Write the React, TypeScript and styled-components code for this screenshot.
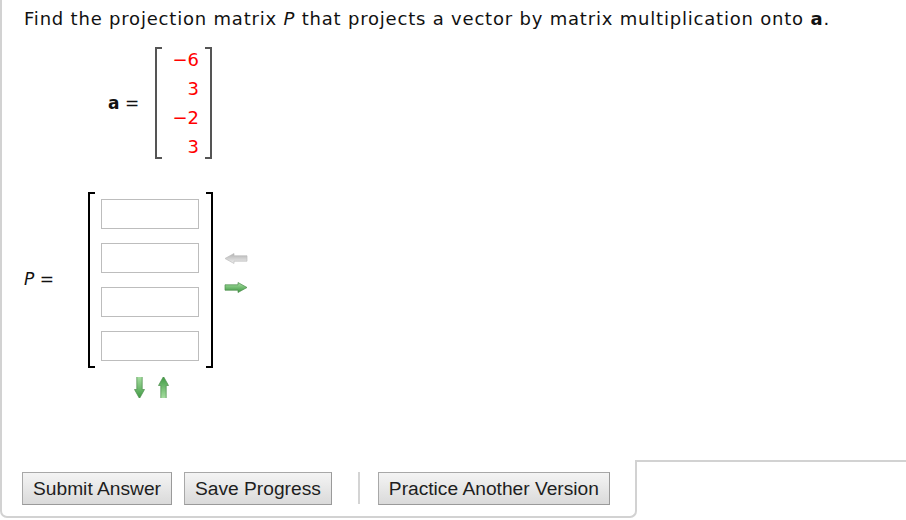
import React from "react";
import styled, { createGlobalStyle } from "styled-components";

const GlobalStyle = createGlobalStyle`
  body {
    margin: 0;
    background: #fff;
    font-family: "DejaVu Sans", Verdana, sans-serif;
  }
`;

const Panel = styled.div`
  width: 906px;
  display: flex;
  flex-direction: column;
`;

const Question = styled.div`
  height: 460px;
  box-sizing: border-box;
  border-left: 2px solid #d2d2d2;
  padding: 6px 0 0 22px;
  color: #111;
`;

const Prompt = styled.p`
  margin: 0;
  font-size: 18px;
  letter-spacing: 0.8px;
  line-height: 26px;
`;

const Var = styled.i`
  font-style: oblique;
`;

const MathRow = styled.div<{ $top: number; $indent: number }>`
  display: flex;
  align-items: center;
  margin-top: ${(p) => p.$top}px;
  margin-left: ${(p) => p.$indent}px;
`;

const Label = styled.div<{ $width: number; $lift?: number }>`
  width: ${(p) => p.$width}px;
  font-size: 17px;
  white-space: nowrap;
  margin-top: ${(p) => -(p.$lift ?? 0)}px;
`;

const Matrix = styled.div`
  display: flex;
  align-items: stretch;
`;

const Bracket = styled.div<{ $side: "left" | "right"; $color: string; $gap: number }>`
  width: 5px;
  border: 2px solid ${(p) => p.$color};
  border-${(p) => (p.$side === "left" ? "right" : "left")}: none;
  margin-${(p) => (p.$side === "left" ? "right" : "left")}: ${(p) => p.$gap}px;
`;

const Entries = styled.div`
  display: flex;
  flex-direction: column;
  align-items: flex-end;
  margin: -2px 0;
  width: 37px;
`;

const Entry = styled.span`
  color: #f00;
  font-size: 18px;
  line-height: 29px;
`;

const Cells = styled.div`
  display: flex;
  flex-direction: column;
  gap: 14px;
  padding: 7px 0;
`;

const Cell = styled.input`
  width: 98px;
  height: 30px;
  box-sizing: border-box;
  border: 1px solid #bdbdbd;
  margin: 0;
  padding: 2px 4px;
  font: 15px "DejaVu Sans", sans-serif;
`;

const SideArrows = styled.div`
  display: flex;
  flex-direction: column;
  gap: 18px;
  margin-left: 11px;
  margin-top: -14px;
`;

const ResizeRow = styled.div`
  display: flex;
  justify-content: center;
  gap: 11px;
  width: 126px;
  margin: 9px 0 0 64px;
`;

const Footer = styled.div`
  display: flex;
  height: 58px;
`;

const ButtonBar = styled.div`
  width: 637px;
  box-sizing: border-box;
  border: 2px solid #d2d2d2;
  border-top: none;
  border-radius: 0 0 7px 7px;
  display: flex;
  align-items: flex-start;
  padding: 12px 0 0 20px;
`;

const Filler = styled.div`
  flex: 1;
  border-top: 2px solid #d2d2d2;
`;

const Button = styled.button<{ $gap?: number }>`
  height: 33px;
  box-sizing: border-box;
  padding: 0 10px;
  margin-right: ${(p) => p.$gap ?? 12}px;
  border: 1px solid #a8a8a8;
  border-right-color: #9a9a9a;
  border-bottom-color: #9a9a9a;
  background: linear-gradient(#f4f4f4, #dadada);
  color: #1e1e1e;
  font: 19.2px "Liberation Sans", Arial, sans-serif;
  white-space: nowrap;
`;

const Separator = styled.div`
  width: 2px;
  height: 32px;
  background: #d4d4d4;
  margin-right: 18px;
  margin-left: 26px;
`;

type Dir = "left" | "right" | "up" | "down";

function Arrow({ dir, tone }: { dir: Dir; tone: "green" | "gray" }) {
  const id = `g-${dir}-${tone}`;
  const light = tone === "green" ? "#a9e0a3" : "#f0f0f0";
  const dark = tone === "green" ? "#3d9841" : "#b2b2b2";
  const edge = tone === "green" ? "#4a8c4a" : "#bdbdbd";
  const horizontal = dir === "left" || dir === "right";
  const w = horizontal ? 24 : 13;
  const h = horizontal ? 11 : 21;
  // right-pointing block arrow in a 24x11 box, rotated for the others
  const shape = "M1 2.8 H14 V0.5 L23 5.5 L14 10.5 V8.2 H1 Z";
  const rot = { right: 0, left: 180, down: 90, up: -90 }[dir];
  return (
    <svg width={w} height={h} viewBox={`0 0 ${w} ${h}`}>
      <defs>
        <linearGradient id={id} x1="0" y1="0" x2={horizontal ? "0" : "1"} y2={horizontal ? "1" : "0"}>
          <stop offset="0" stopColor={light} />
          <stop offset="1" stopColor={dark} />
        </linearGradient>
      </defs>
      <g
        transform={
          horizontal
            ? `rotate(${rot} 12 5.5)`
            : `translate(${w / 2} ${h / 2}) rotate(${rot}) translate(-12 -5.5)`
        }
      >
        <path d={shape} fill={`url(#${id})`} stroke={edge} strokeWidth="0.7" strokeLinejoin="round" />
      </g>
    </svg>
  );
}

export default function App() {
  const a = ["\u22126", "3", "\u22122", "3"];
  return (
    <Panel>
      <GlobalStyle />
      <Question>
        <Prompt>
          Find the projection matrix <Var>P</Var> that projects a vector by matrix
          multiplication onto <b>a</b>.
        </Prompt>

        <MathRow $top={15} $indent={84}>
          <Label $width={47}>
            <b>a</b> =
          </Label>
          <Matrix>
            <Bracket $side="left" $color="#555" $gap={0} />
            <Entries>
              {a.map((v, i) => (
                <Entry key={i}>{v}</Entry>
              ))}
            </Entries>
            <Bracket $side="right" $color="#555" $gap={6} />
          </Matrix>
        </MathRow>

        <MathRow $top={33} $indent={0}>
          <Label $width={64} $lift={3}>
            <Var>P</Var> =
          </Label>
          <Matrix>
            <Bracket $side="left" $color="#000" $gap={6} />
            <Cells>
              <Cell />
              <Cell />
              <Cell />
              <Cell />
            </Cells>
            <Bracket $side="right" $color="#000" $gap={7} />
          </Matrix>
          <SideArrows>
            <Arrow dir="left" tone="gray" />
            <Arrow dir="right" tone="green" />
          </SideArrows>
        </MathRow>

        <ResizeRow>
          <Arrow dir="down" tone="green" />
          <Arrow dir="up" tone="green" />
        </ResizeRow>
      </Question>

      <Footer>
        <ButtonBar>
          <Button>Submit Answer</Button>
          <Button $gap={0}>Save Progress</Button>
          <Separator />
          <Button>Practice Another Version</Button>
        </ButtonBar>
        <Filler />
      </Footer>
    </Panel>
  );
}
